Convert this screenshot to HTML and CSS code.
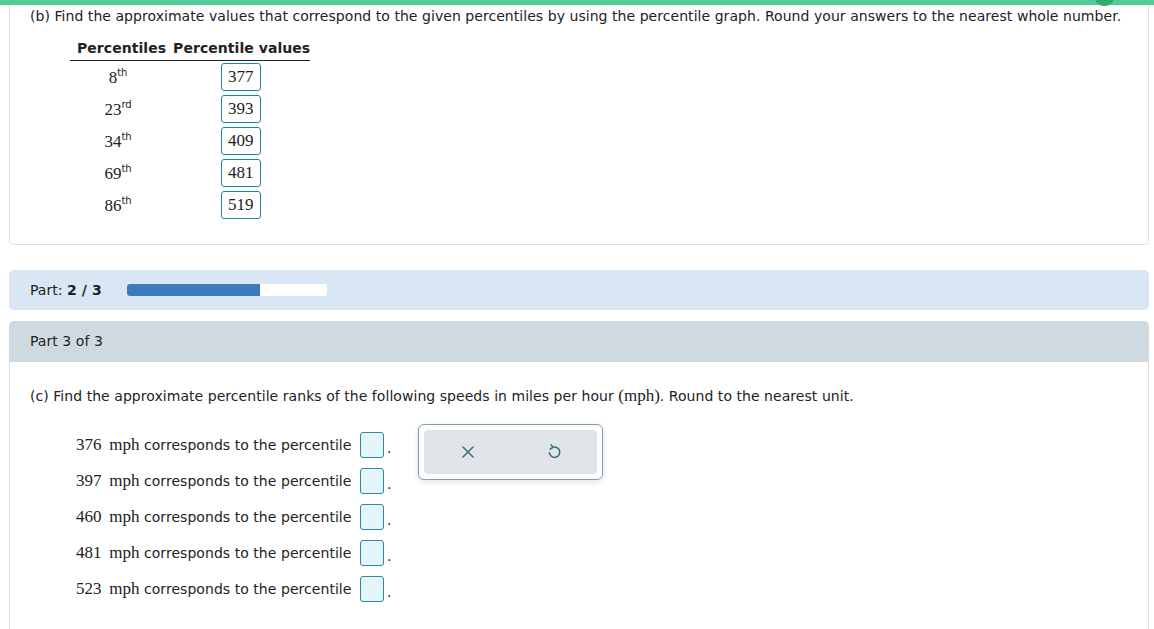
FILE: index.html
```html
<!DOCTYPE html>
<html>
<head>
<meta charset="utf-8">
<link rel="stylesheet" href="styles.css">
</head>
<body>
<div class="topbar"><span class="topdot"></span></div>
<div class="page">
  <section class="card card-b">
    <p class="prompt">(b) Find the approximate values that correspond to the given percentiles by using the percentile graph. Round your answers to the nearest whole number.</p>
    <table class="ptable">
      <thead>
        <tr><th>Percentiles</th><th>Percentile values</th></tr>
      </thead>
      <tbody>
        <tr><td class="pct">8<sup>th</sup></td><td class="val"><span class="valbox">377</span></td></tr>
        <tr><td class="pct">23<sup>rd</sup></td><td class="val"><span class="valbox">393</span></td></tr>
        <tr><td class="pct">34<sup>th</sup></td><td class="val"><span class="valbox">409</span></td></tr>
        <tr><td class="pct">69<sup>th</sup></td><td class="val"><span class="valbox">481</span></td></tr>
        <tr><td class="pct">86<sup>th</sup></td><td class="val"><span class="valbox">519</span></td></tr>
      </tbody>
    </table>
  </section>

  <div class="partbar">
    <span class="partlabel">Part: <b>2 / 3</b></span>
    <div class="progress"><div class="progress-fill" style="width: 66.5%"></div></div>
  </div>

  <section class="part3">
    <div class="part3-head">Part 3 of 3</div>
    <div class="part3-body">
      <p class="prompt">(c) Find the approximate percentile ranks of the following speeds in miles per hour <span class="serif">(mph)</span>. Round to the nearest unit.</p>
      <div class="answer-area">
        <div class="rows">
          <div class="row"><span class="serif speed">376 mph</span> corresponds to the percentile <span class="inbox"></span><span class="dot">.</span></div>
          <div class="row"><span class="serif speed">397 mph</span> corresponds to the percentile <span class="inbox"></span><span class="dot">.</span></div>
          <div class="row"><span class="serif speed">460 mph</span> corresponds to the percentile <span class="inbox"></span><span class="dot">.</span></div>
          <div class="row"><span class="serif speed">481 mph</span> corresponds to the percentile <span class="inbox"></span><span class="dot">.</span></div>
          <div class="row"><span class="serif speed">523 mph</span> corresponds to the percentile <span class="inbox"></span><span class="dot">.</span></div>
        </div>
        <div class="tools">
          <div class="tools-inner">
            <span class="tool">
              <svg width="14" height="14" viewBox="0 0 14 14"><path d="M2 2 L12 12 M12 2 L2 12" stroke="#3f6b79" stroke-width="1.5" fill="none" stroke-linecap="round"/></svg>
            </span>
            <span class="tool">
              <svg width="16" height="18" viewBox="0 0 16 18"><path d="M6.6 4.4 A5.2 5.2 0 1 1 3.4 9.8" stroke="#3f6b79" stroke-width="1.5" fill="none" stroke-linecap="round"/><path d="M5.2 1.8 L6.8 4.4 L4.2 6.2" stroke="#3f6b79" stroke-width="1.5" fill="none" stroke-linecap="round" stroke-linejoin="round"/></svg>
            </span>
          </div>
        </div>
      </div>
    </div>
  </section>
</div>
</body>
</html>
```

FILE: styles.css
```css
html, body {
  margin: 0;
  padding: 0;
  background: #ffffff;
}
body {
  font-family: "DejaVu Sans", Verdana, sans-serif;
  font-size: 14px;
  letter-spacing: 0.05px;
  color: #222222;
  overflow: hidden;
  height: 629px;
}
.topbar {
  height: 5px;
  background: #52cd98;
  position: relative;
}
.topdot {
  position: absolute;
  left: 1094px;
  top: -16px;
  width: 21px;
  height: 22px;
  border-radius: 50%;
  background: #2fae6a;
}
.page {
  padding: 0 5px 0 9px;
}
.card {
  border: 1px solid #d6dee3;
  border-top: none;
  border-radius: 0 0 5px 5px;
}
.card-b {
  padding: 1px 20px 23px 20px;
}
.prompt {
  margin: 0;
  line-height: 20px;
}
.serif {
  font-family: "Liberation Serif", "Times New Roman", serif;
  font-size: 17px;
  letter-spacing: 0;
}
.ptable {
  border-collapse: collapse;
  margin: 12px 0 0 40px;
}
.ptable th {
  font-weight: bold;
  padding: 0 0 2px 7px;
  border-bottom: 1px solid #222;
  line-height: 20px;
  text-align: center;
}
.ptable td {
  text-align: center;
  padding: 2px 0 2px 0;
  height: 28px;
}
.ptable td.val {
  padding-left: 5px;
}
.pct {
  font-family: "Liberation Serif", "Times New Roman", serif;
  font-size: 17px;
  letter-spacing: 0;
}
.pct sup {
  font-family: "DejaVu Sans", Verdana, sans-serif;
  font-size: 10px;
  vertical-align: 7px;
}
.valbox {
  display: inline-block;
  box-sizing: border-box;
  width: 40px;
  height: 28px;
  line-height: 26px;
  border: 1px solid #1f879e;
  border-radius: 3px;
  font-family: "Liberation Serif", "Times New Roman", serif;
  font-size: 17px;
  letter-spacing: 0;
  text-align: center;
  vertical-align: middle;
}
.partbar {
  margin-top: 25px;
  height: 40px;
  background: #d9e6f3;
  border-radius: 5px;
  display: flex;
  align-items: center;
  padding-left: 21px;
}
.partlabel {
  width: 97px;
}
.progress {
  width: 200px;
  height: 12px;
  background: #ffffff;
  border-radius: 3px;
  overflow: hidden;
}
.progress-fill {
  height: 100%;
  background: #3c79bd;
}
.part3 {
  margin-top: 11px;
}
.part3-head {
  height: 41px;
  line-height: 41px;
  background: #cfdae0;
  border-radius: 5px 5px 0 0;
  padding-left: 21px;
}
.part3-body {
  box-sizing: border-box;
  height: 268px;
  border-left: 1px solid #d6dee3;
  border-right: 1px solid #d6dee3;
  padding: 24px 20px 0 20px;
}
.answer-area {
  display: flex;
  align-items: flex-start;
  gap: 27px;
  margin-top: 21px;
  padding-left: 46px;
}
.rows {
  display: flex;
  flex-direction: column;
}
.row {
  height: 36px;
  display: flex;
  align-items: center;
  white-space: pre;
}
.speed {
  word-spacing: 3.5px;
}
.inbox {
  display: inline-block;
  box-sizing: border-box;
  width: 24px;
  height: 26px;
  background: #e4f5f9;
  border: 1px solid #2a8ba2;
  border-radius: 3px;
  margin-left: 4px;
}
.dot {
  margin-left: 3px;
  position: relative;
  top: 3px;
}
.tools {
  margin-top: -3px;
  box-sizing: border-box;
  width: 185px;
  height: 56px;
  border: 1px solid #7aa0ad;
  border-radius: 6px;
  padding: 5px;
  background: #fff;
  box-shadow: 0 2px 6px rgba(0, 0, 0, 0.12);
}
.tools-inner {
  height: 44px;
  background: #dfe5e8;
  border-radius: 4px;
  display: flex;
  align-items: center;
  justify-content: space-around;
}
.tool {
  display: flex;
  width: 20px;
  justify-content: center;
}
```
